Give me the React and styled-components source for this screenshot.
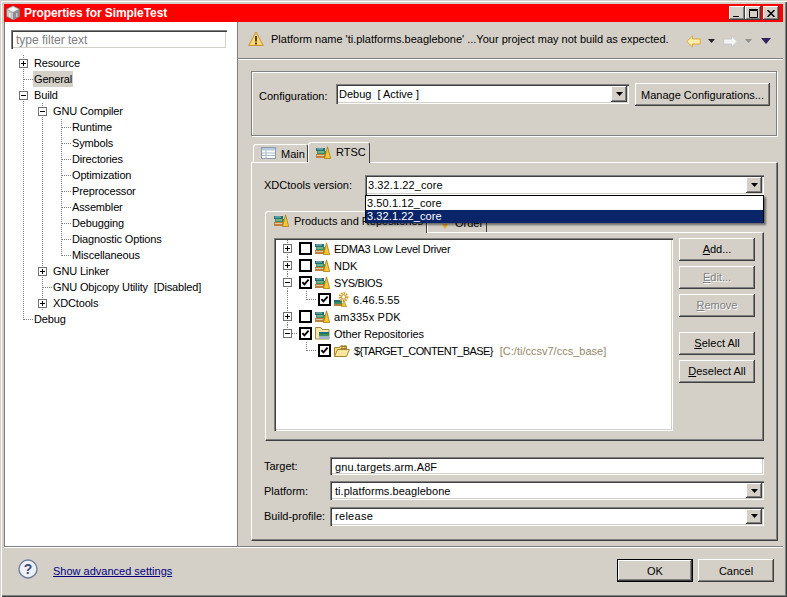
import React from 'react'
import styled, { createGlobalStyle, css } from 'styled-components'

const GlobalStyle = createGlobalStyle`
  html, body { margin: 0; padding: 0; background: #d4d0c8; }
  * { box-sizing: border-box; }
  body {
    font-family: "Liberation Sans", Arial, sans-serif;
    font-size: 11px;
    color: #000;
  }
`

const raised = css`
  box-shadow: inset -1px -1px 0 #404040, inset 1px 1px 0 #fff, inset -2px -2px 0 #808080, inset 2px 2px 0 #d4d0c8;
`
const sunken = css`
  box-shadow: inset 1px 1px 0 #808080, inset 2px 2px 0 #404040, inset -1px -1px 0 #fff, inset -2px -2px 0 #d4d0c8;
`

const Window = styled.div`
  width: 787px;
  height: 597px;
  padding: 4px;
  display: flex;
  flex-direction: column;
  background: #d4d0c8;
  overflow: hidden;
  box-shadow: inset 1px 1px 0 #d4d0c8, inset 2px 2px 0 #fff, inset -1px -1px 0 #404040, inset -2px -2px 0 #808080;
`

const TitleBar = styled.div`
  height: 18px;
  flex: none;
  display: flex;
  align-items: center;
  background: #f00;
  color: #fff;
  font-weight: bold;
  font-size: 12px;
  letter-spacing: -0.08px;
  padding: 0 4px 0 1px;
  gap: 3px;
`

const TitleText = styled.span`
  flex: 1;
`

const WinButton = styled.div`
  width: 16px;
  height: 14px;
  margin-left: ${p => p.$gap || 0}px;
  display: flex;
  align-items: center;
  justify-content: center;
  background: #d4d0c8;
  ${raised}
`

const WinButtons = styled.div`
  display: flex;
`

const Body = styled.div`
  flex: 1;
  display: flex;
  min-height: 0;
`

const LeftPane = styled.div`
  width: 234px;
  flex: none;
  background: #fff;
  border: 1px solid #808080;
  border-top: none;
  padding: 8px 0 0 0;
`

const FilterInput = styled.div`
  width: 216px;
  height: 19px;
  margin: 0 0 6px 6px;
  padding: 3px 0 0 5px;
  color: #808080;
  font-size: 12px;
  background: #fff;
  ${sunken}
`

const Tree = styled.div`
  display: flex;
  flex-direction: column;
  padding-left: ${p => p.$inset || 0}px;
`

const Row = styled.div`
  display: flex;
  align-items: center;
  height: ${p => p.$h || 16}px;
  white-space: pre;
`

const guideLine = {
  pipe: css`
    background-image: repeating-linear-gradient(to bottom, #808080 0 1px, transparent 1px 2px);
    background-size: 1px 100%;
    background-position: 9px 0;
    background-repeat: no-repeat;
  `,
  tee: css`
    background-image:
      repeating-linear-gradient(to bottom, #808080 0 1px, transparent 1px 2px),
      repeating-linear-gradient(to right, #808080 0 1px, transparent 1px 2px);
    background-size: 1px 100%, 9px 1px;
    background-position: 9px 0, 10px 8px;
    background-repeat: no-repeat;
  `,
  end: css`
    background-image:
      repeating-linear-gradient(to bottom, #808080 0 1px, transparent 1px 2px),
      repeating-linear-gradient(to right, #808080 0 1px, transparent 1px 2px);
    background-size: 1px 9px, 9px 1px;
    background-position: 9px 0, 10px 8px;
    background-repeat: no-repeat;
  `,
  none: css``
}

const Guide = styled.div`
  width: 19px;
  height: 100%;
  flex: none;
  display: flex;
  align-items: center;
  padding-left: 5px;
  ${p => guideLine[p.$kind]}
`

const NavLabel = styled.span`
  padding: 0 1px;
  height: 16px;
  line-height: 16px;
  letter-spacing: -0.15px;
  background: ${p => (p.$selected ? '#d4d0c8' : 'transparent')};
`

const RepoLabel = styled.span`
  margin-left: 3px;
  padding: 0 1px;
  letter-spacing: ${p => p.$spacing || 0}px;
`

const Box = styled.svg`
  display: block;
  flex: none;
  margin-left: ${p => p.$ml || 0}px;
`

const RightPane = styled.div`
  flex: 1;
  min-width: 0;
  display: flex;
  flex-direction: column;
  border-bottom: 1px solid #808080;
`

const MessageBar = styled.div`
  height: 37px;
  flex: none;
  display: flex;
  align-items: center;
  padding: 0 12px 3px 10px;
  border-bottom: 1px solid #808080;
  box-shadow: 0 1px 0 #fff;
`

const MessageText = styled.span`
  flex: 1;
  margin-left: 7px;
`

const NavIcons = styled.div`
  display: flex;
  align-items: center;
  margin-top: 5px;
`

const NavSlot = styled.div`
  display: flex;
  margin-left: ${p => p.$ml}px;
`

const Content = styled.div`
  flex: 1;
  padding: 12px 5px 0 13px;
  display: flex;
  flex-direction: column;
`

const ConfigGroup = styled.div`
  height: 65px;
  margin-right: 1px;
  flex: none;
  padding: 12px 6px 0 7px;
  display: flex;
  align-items: flex-start;
  border: 1px solid #808080;
  box-shadow: 1px 1px 0 #fff, inset 1px 1px 0 #fff;
`

const ConfigLabel = styled.label`
  width: 77px;
  flex: none;
  padding-top: 6px;
`

const ComboBox = styled.div`
  position: relative;
  flex: ${p => (p.$width ? 'none' : 1)};
  width: ${p => (p.$width ? `${p.$width}px` : 'auto')};
  height: ${p => p.$h || 20}px;
  margin-top: ${p => p.$mt || 0}px;
  display: flex;
  align-items: center;
  padding: 0 2px 0 ${p => p.$pl || 3}px;
  background: #fff;
  ${sunken}
`

const ComboValue = styled.span`
  flex: 1;
  white-space: pre;
  letter-spacing: ${p => p.$spacing || 0}px;
`

const ComboArrow = styled.div`
  width: 16px;
  height: calc(100% - 4px);
  display: flex;
  align-items: center;
  justify-content: center;
  background: #d4d0c8;
  ${raised}
`

const DropList = styled.div`
  position: absolute;
  top: 100%;
  left: 0;
  right: 0;
  z-index: 5;
  height: 28px;
  padding-top: 1px;
  border: 1px solid #000;
  background: #fff;
  box-shadow: 2px 2px 2px rgba(0, 0, 0, 0.5);
`

const DropItem = styled.div`
  height: 13px;
  line-height: 13px;
  padding-left: 1px;
  letter-spacing: 0.1px;
  background: ${p => (p.$selected ? '#0a246a' : 'transparent')};
  color: ${p => (p.$selected ? '#fff' : '#000')};
`

const Button = styled.div`
  width: ${p => p.$width || 76}px;
  height: ${p => p.$h || 23}px;
  flex: none;
  margin-top: ${p => p.$mt || 0}px;
  margin-left: ${p => p.$ml || 0}px;
  display: flex;
  align-items: center;
  justify-content: center;
  background: #d4d0c8;
  color: ${p => (p.$disabled ? '#808080' : '#000')};
  text-shadow: ${p => (p.$disabled ? '1px 1px 0 #fff' : 'none')};
  ${raised}
  ${p => p.$default && css`
    box-shadow: inset 0 0 0 1px #000, inset -2px -2px 0 #404040, inset 2px 2px 0 #fff, inset -3px -3px 0 #808080;
  `}
`

const SideButton = styled(Button)`
  padding-bottom: 2px;
`

const TabStrip = styled.div`
  display: flex;
  align-items: flex-end;
  flex: none;
  height: ${p => p.$h}px;
  padding-left: ${p => p.$inset || 0}px;
  margin-top: ${p => p.$mt || 0}px;
  margin-left: ${p => p.$ml || 0}px;
`

const Tab = styled.div`
  position: relative;
  z-index: ${p => (p.$active ? 2 : 1)};
  width: ${p => p.$width}px;
  height: ${p => p.$h}px;
  margin-bottom: ${p => (p.$active ? -1 : 0)}px;
  display: flex;
  align-items: center;
  gap: 5px;
  padding-left: ${p => p.$pad || 8}px;
  padding-bottom: ${p => p.$up || 0}px;
  background: #d4d0c8;
  border-top: 1px solid #fff;
  border-left: 1px solid #fff;
  border-right: 1px solid #404040;
  border-radius: 3px 3px 0 0;
`

const TabPanel = styled.div`
  flex: none;
  height: ${p => p.$h}px;
  display: flex;
  flex-direction: ${p => p.$dir || 'column'};
  padding: ${p => p.$pad};
  margin-left: ${p => p.$ml || 0}px;
  border: 1px solid;
  border-color: #fff #404040 #404040 #fff;
  box-shadow: inset -1px -1px 0 #808080;
`

const VersionRow = styled.div`
  display: flex;
  align-items: center;
  height: 20px;
  flex: none;
`

const VersionLabel = styled.label`
  width: 101px;
  flex: none;
`

const TreeBox = styled.div`
  width: 399px;
  height: 193px;
  flex: none;
  padding: 2px 0 0 4px;
  background: #fff;
  ${sunken}
`

const SideButtons = styled.div`
  display: flex;
  flex-direction: column;
  margin-left: 6px;
`

const FormGrid = styled.div`
  display: grid;
  grid-template-columns: 66px 1fr;
  grid-template-rows: 18px 19px 19px;
  row-gap: 6px;
  align-items: center;
  margin-top: 16px;
`

const TextField = styled.div`
  height: 18px;
  padding: 1px 0 0 5px;
  display: flex;
  align-items: center;
  background: #fff;
  letter-spacing: 0.1px;
  ${sunken}
`

const Footer = styled.div`
  height: 46px;
  flex: none;
  display: flex;
  align-items: center;
  padding: 0 9px 0 14px;
  border-top: 1px solid #fff;
`

const HelpIcon = styled.svg`
  flex: none;
  margin-top: -3px;
`

const HelpLink = styled.a`
  flex: 1;
  margin-left: 15px;
  margin-top: 1px;
  color: #00007f;
  text-decoration: underline;
`

const Comment = styled.span`
  color: #958767;
  margin-left: 7px;
  letter-spacing: 0;
`

const Plus = ({ open }) => (
  <Box width="9" height="9" viewBox="0 0 9 9">
    <rect x="0.5" y="0.5" width="8" height="8" fill="#fff" stroke="#707070" />
    <path d={open ? 'M2 4.5h5' : 'M2 4.5h5M4.5 2v5'} stroke="#000" />
  </Box>
)

const Guides = ({ kinds }) => kinds.map((k, i) => {
  if (k === 'plus' || k === 'minus' || k === 'minusTop' || k === 'plusPipe') {
    return <Guide key={i} $kind={k === 'minusTop' ? 'end' : 'pipe'}><Plus open={k !== 'plus' && k !== 'plusPipe'} /></Guide>
  }
  return <Guide key={i} $kind={k} />
})

const Books = ({ ml = 3 }) => (
  <Box $ml={ml} width="15" height="13" viewBox="0 0 15 13">
    <rect x="0" y="2" width="9" height="3" fill="#1f6f78" />
    <rect x="1" y="5" width="9" height="3" fill="#3f8f5a" />
    <rect x="0" y="8" width="10" height="4" fill="#c17f3c" />
    <path d="M1 3h6M2 6h6M1 9.5h7" stroke="#dfeee0" strokeWidth="0.7" />
    <path d="M8.5 12.5 L11.5 .8 L14.7 12.5 Z" fill="#f5c932" stroke="#a77a10" strokeWidth="0.8" />
  </Box>
)

const GearBooks = () => (
  <Box $ml={3} width="15" height="15" viewBox="0 0 15 15">
    <rect x="0" y="8" width="8" height="2" fill="#1f6f78" />
    <rect x="0" y="10" width="8" height="2" fill="#3f8f5a" />
    <rect x="0" y="12" width="8" height="2" fill="#c17f3c" />
    <circle cx="9.5" cy="5" r="3.8" fill="none" stroke="#d9a520" strokeWidth="2.2" strokeDasharray="1.6 0.9" />
    <circle cx="9.5" cy="5" r="2.3" fill="#fff6d0" stroke="#9a7414" strokeWidth="0.7" />
    <path d="M7.5 14.5 L10 8.5 L12.5 14.5 Z" fill="#f5c932" stroke="#a77a10" strokeWidth="0.6" />
  </Box>
)

const RepoFolder = () => (
  <Box $ml={3} width="15" height="15" viewBox="0 0 15 15">
    <path d="M0.5 13V1.5h5l1.5 2h7V13Z" fill="#f8e7a8" stroke="#a58a3c" />
    <rect x="4" y="6" width="10" height="2" fill="#1f6f78" />
    <rect x="4" y="8" width="10" height="2" fill="#3f8f5a" />
    <rect x="4" y="10" width="10" height="3" fill="#9fb6c8" />
  </Box>
)

const OpenFolder = () => (
  <Box $ml={3} width="16" height="14" viewBox="0 0 16 14">
    <path d="M0.5 12.5V3.5h5l1-1.5h6v3" fill="#f7dc8c" stroke="#a5842e" />
    <path d="M0.5 12.5 L3.5 5.5H15.5L12.5 12.5Z" fill="#fbe59d" stroke="#a5842e" />
    <path d="M8 1v5M11 1v5M6.5 2.5h6M6.5 4.5h6" stroke="#8a6a20" strokeWidth="0.7" />
  </Box>
)

const CheckBox = ({ checked, ml = 2 }) => (
  <Box $ml={ml} width="13" height="13" viewBox="0 0 13 13">
    <rect x="1" y="1" width="11" height="11" fill="#fff" stroke="#000" strokeWidth="2" />
    {checked && <path d="M3.4 6.2 L5.4 8.4 L9.6 3.6" fill="none" stroke="#000" strokeWidth="1.9" />}
  </Box>
)

const DownArrow = ({ color = '#000' }) => (
  <svg width="7" height="4" viewBox="0 0 7 4"><path d="M0 0h7L3.5 4Z" fill={color} /></svg>
)

const leftRows = [
  { kinds: ['plusPipe'], label: 'Resource' },
  { kinds: ['tee'], label: 'General', selected: true },
  { kinds: ['minus'], label: 'Build' },
  { kinds: ['pipe', 'minus'], label: 'GNU Compiler' },
  ...['Runtime', 'Symbols', 'Directories', 'Optimization', 'Preprocessor', 'Assembler', 'Debugging', 'Diagnostic Options']
    .map(label => ({ kinds: ['pipe', 'pipe', 'tee'], label })),
  { kinds: ['pipe', 'pipe', 'end'], label: 'Miscellaneous' },
  { kinds: ['pipe', 'plusPipe'], label: 'GNU Linker' },
  { kinds: ['pipe', 'tee'], label: 'GNU Objcopy Utility  [Disabled]' },
  { kinds: ['pipe', 'plus'], label: 'XDCtools' },
  { kinds: ['end'], label: 'Debug' }
]

export default function App () {
  return <Window>
    <GlobalStyle />
    <TitleBar>
      <svg width="16" height="16" viewBox="0 0 16 16">
        <path d="M8 1 L14.5 4.2 V11.5 L8 15 L1.5 11.5 V4.2 Z" fill="#c8c8c8" stroke="#707070" strokeWidth="0.8" />
        <path d="M8 1 L14.5 4.2 L8 7.5 L1.5 4.2 Z" fill="#f2f2f2" stroke="#707070" strokeWidth="0.6" />
        <path d="M8 7.5 V15 L14.5 11.5 V4.2 Z" fill="#8e8e8e" />
        <path d="M4 9h1.5M4 11h1.5M11 9h1.5M11 11h1.5M7 4h2" stroke="#fff" strokeWidth="1" />
      </svg>
      <TitleText>Properties for SimpleTest</TitleText>
      <WinButtons>
        <WinButton>
          <svg width="8" height="8" viewBox="0 0 8 8"><path d="M0 7h6v1.4H0Z" fill="#000" /></svg>
        </WinButton>
        <WinButton>
          <svg width="9" height="9" viewBox="0 0 9 9"><path d="M.5 1.5h8v7h-8Z" fill="none" stroke="#000" /><path d="M0 .5h9" stroke="#000" strokeWidth="1.4" /></svg>
        </WinButton>
        <WinButton $gap={2}>
          <svg width="8" height="7" viewBox="0 0 8 7"><path d="M.5 0 L7.5 7M7.5 0 L.5 7" stroke="#000" strokeWidth="1.5" /></svg>
        </WinButton>
      </WinButtons>
    </TitleBar>

    <Body>
      <LeftPane>
        <FilterInput>type filter text</FilterInput>
        <Tree $inset={9}>
          {leftRows.map(r => <Row key={r.label}>
            <Guides kinds={r.kinds} />
            <NavLabel $selected={r.selected}>{r.label}</NavLabel>
          </Row>)}
        </Tree>
      </LeftPane>

      <RightPane>
        <MessageBar>
          <svg width="16" height="16" viewBox="0 0 16 16">
            <path d="M8 1 L15.3 14.5 H.7 Z" fill="#fbd775" stroke="#c8923a" strokeLinejoin="round" />
            <rect x="7" y="5" width="2" height="5.5" fill="#5a4410" />
            <rect x="7" y="11.5" width="2" height="2" fill="#5a4410" />
          </svg>
          <MessageText>Platform name 'ti.platforms.beaglebone' ...Your project may not build as expected.</MessageText>
          <NavIcons>
            <svg width="15" height="13" viewBox="0 0 15 13"><path d="M.7 6.5 L6.5 1 V4 H14.3 V9 H6.5 V12 Z" fill="#fdeeb0" stroke="#dca83a" strokeLinejoin="round" /></svg>
            <NavSlot $ml={7}><DownArrow color="#222" /></NavSlot>
            <NavSlot $ml={8}>
              <svg width="15" height="13" viewBox="0 0 15 13"><path d="M14.3 6.5 L8.5 1 V4 H.7 V9 H8.5 V12 Z" fill="#f4f4f4" stroke="#c8c8d0" strokeLinejoin="round" /></svg>
            </NavSlot>
            <NavSlot $ml={7}><DownArrow color="#909090" /></NavSlot>
            <NavSlot $ml={9}>
              <svg width="10" height="6" viewBox="0 0 10 6"><path d="M0 0h10L5 6Z" fill="#2e2460" /></svg>
            </NavSlot>
          </NavIcons>
        </MessageBar>

        <Content>
          <ConfigGroup>
            <ConfigLabel>Configuration:</ConfigLabel>
            <ComboBox $width={293}>
              <ComboValue>Debug  [ Active ]</ComboValue>
              <ComboArrow><DownArrow /></ComboArrow>
            </ComboBox>
            <Button $width={135} $ml={6} $mt={-1}>Manage Configurations...</Button>
          </ConfigGroup>

          <TabStrip $h={21} $mt={5} $inset={2}>
            <Tab $width={55} $h={18} $pad={7}>
              <svg width="15" height="13" viewBox="0 0 15 13">
                <rect x=".5" y=".5" width="14" height="11" fill="#fff" stroke="#8a9bb0" />
                <path d="M1 1h13v2.5H1Z" fill="#b8c8dc" />
                <path d="M1 6h13M1 8.5h13M5 3v8.5" stroke="#a8b8cc" />
              </svg>
              Main
            </Tab>
            <Tab $width={62} $h={21} $active $pad={7} $up={2}><Books ml={0} />RTSC</Tab>
          </TabStrip>

          <TabPanel $h={379} $pad="12px 13px 0 12px">
            <VersionRow>
              <VersionLabel>XDCtools version:</VersionLabel>
              <ComboBox>
                <ComboValue $spacing={0.1}>3.32.1.22_core</ComboValue>
                <ComboArrow><DownArrow /></ComboArrow>
                <DropList>
                  <DropItem>3.50.1.12_core</DropItem>
                  <DropItem $selected>3.32.1.22_core</DropItem>
                </DropList>
              </ComboBox>
            </VersionRow>

            <TabStrip $h={22} $mt={15} $ml={1}>
              <Tab $width={162} $h={22} $active $pad={8} $up={4}><Books ml={0} />Products and Repositories</Tab>
              <Tab $width={60} $h={20} $pad={12}>
                <svg width="10" height="12" viewBox="0 0 10 12"><path d="M5 12 L2 7 H8 Z" fill="#e8a820" /></svg>
                Order
              </Tab>
            </TabStrip>

            <TabPanel $h={209} $dir="row" $pad="5px 0 0 8px" $ml={1}>
              <TreeBox>
                <Tree>
                  <Row $h={17}><Guides kinds={['plusPipe']} /><CheckBox /><Books /><RepoLabel $spacing={-0.3}>EDMA3 Low Level Driver</RepoLabel></Row>
                  <Row $h={17}><Guides kinds={['plusPipe']} /><CheckBox /><Books /><RepoLabel>NDK</RepoLabel></Row>
                  <Row $h={17}><Guides kinds={['minus']} /><CheckBox checked /><Books /><RepoLabel $spacing={-0.4}>SYS/BIOS</RepoLabel></Row>
                  <Row $h={17}><Guides kinds={['pipe', 'end']} /><CheckBox checked /><GearBooks /><RepoLabel $spacing={0.1}>6.46.5.55</RepoLabel></Row>
                  <Row $h={17}><Guides kinds={['plusPipe']} /><CheckBox /><Books /><RepoLabel $spacing={0.2}>am335x PDK</RepoLabel></Row>
                  <Row $h={17}><Guides kinds={['minusTop']} /><CheckBox checked /><RepoFolder /><RepoLabel $spacing={-0.1}>Other Repositories</RepoLabel></Row>
                  <Row $h={17}><Guides kinds={['none', 'end']} /><CheckBox checked /><OpenFolder /><RepoLabel $spacing={-0.6}>{'${TARGET_CONTENT_BASE}'}<Comment>[C:/ti/ccsv7/ccs_base]</Comment></RepoLabel></Row>
                </Tree>
              </TreeBox>
              <SideButtons>
                <SideButton><span><u>A</u>dd...</span></SideButton>
                <SideButton $mt={5} $disabled><span><u>E</u>dit...</span></SideButton>
                <SideButton $mt={5} $disabled><span><u>R</u>emove</span></SideButton>
                <SideButton $mt={15}><span><u>S</u>elect All</span></SideButton>
                <SideButton $mt={5}><span><u>D</u>eselect All</span></SideButton>
              </SideButtons>
            </TabPanel>

            <FormGrid>
              <label>Target:</label>
              <TextField>gnu.targets.arm.A8F</TextField>
              <label>Platform:</label>
              <ComboBox $h={19} $pl={5}>
                <ComboValue $spacing={0.05}>ti.platforms.beaglebone</ComboValue>
                <ComboArrow><DownArrow /></ComboArrow>
              </ComboBox>
              <label>Build-profile:</label>
              <ComboBox $h={19} $pl={5} $mt={1}>
                <ComboValue $spacing={0.3}>release</ComboValue>
                <ComboArrow><DownArrow /></ComboArrow>
              </ComboBox>
            </FormGrid>
          </TabPanel>
        </Content>
      </RightPane>
    </Body>

    <Footer>
      <HelpIcon width="20" height="20" viewBox="0 0 20 20">
        <circle cx="10" cy="10" r="9" fill="#eef1f8" stroke="#6f7f9a" strokeWidth="1.4" />
        <text x="10" y="15" textAnchor="middle" fontFamily="Liberation Sans, sans-serif" fontWeight="bold" fontSize="14" fill="#3c4a78">?</text>
      </HelpIcon>
      <HelpLink>Show advanced settings</HelpLink>
      <Button $default>OK</Button>
      <Button $ml={5}>Cancel</Button>
    </Footer>
  </Window>
}
